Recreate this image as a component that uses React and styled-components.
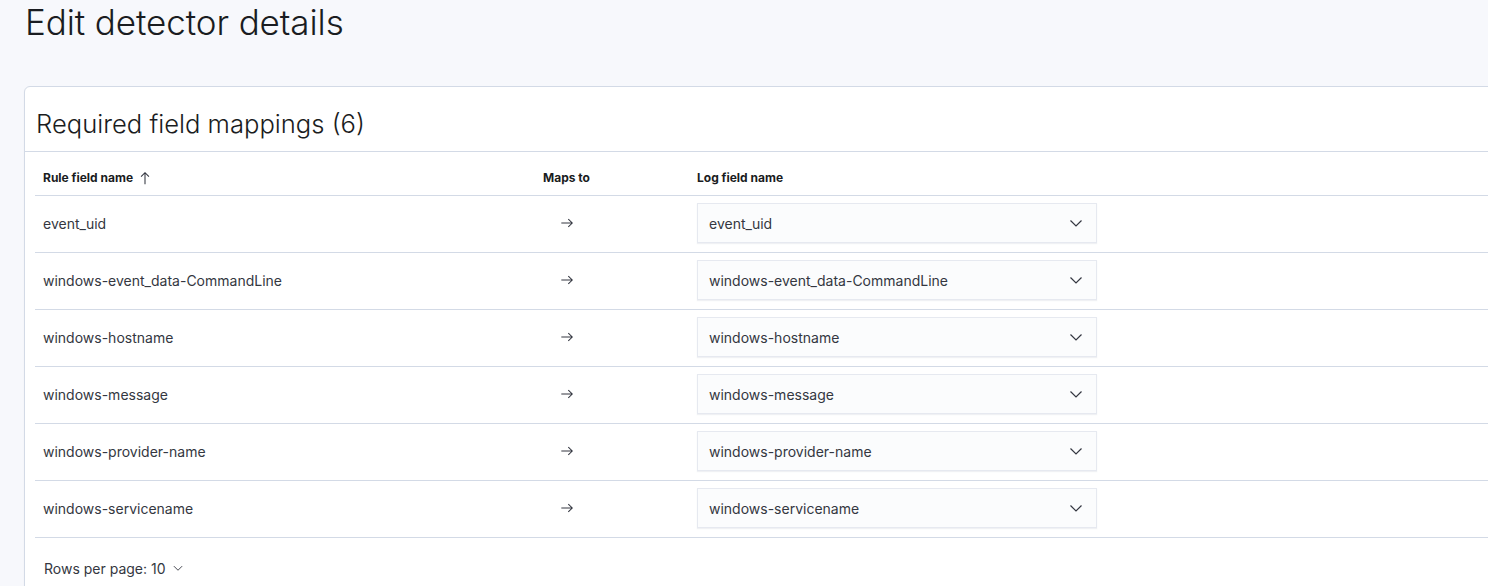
import styled, { createGlobalStyle } from 'styled-components'

const GlobalStyle = createGlobalStyle`
    html, body {
        margin: 0;
        padding: 0;
        background: #f7f8fc;
        overflow: hidden;
    }
    body {
        font-family: Inter, "Noto Sans", sans-serif;
        color: #343741;
        -webkit-font-smoothing: antialiased;
    }
`

const Page = styled.div`
    width: 1700px;
    padding: 0 0 0 24px;
`

const PageTitle = styled.h1`
    margin: 0;
    padding: 0 0 0 1px;
    height: 86px;
    font-size: 35px;
    font-weight: 300;
    line-height: 44px;
    color: #1a1c21;
    letter-spacing: -0.1px;
`

const Panel = styled.section`
    background: #fff;
    border: 1px solid #d3dae6;
    border-radius: 6px;
    box-shadow: 0 1px 2px rgba(0, 0, 0, 0.04);
`

const PanelHeader = styled.div`
    height: 64px;
    padding: 0 11px;
    display: flex;
    align-items: center;
    border-bottom: 1px solid #d3dae6;
`

const PanelTitle = styled.h2`
    margin: 8px 0 0;
    font-size: 25.6px;
    font-weight: 300;
    color: #1a1c21;
`

const TableWrap = styled.div`
    padding: 0 0 0 10px;
`

const Row = styled.div`
    display: grid;
    grid-template-columns: 500px 154px 1fr;
    align-items: center;
    box-sizing: border-box;
    height: ${(p) => (p.$head ? 44 : 57)}px;
    padding: ${(p) => (p.$head ? '8px 0 0' : '0 0 2px')};
    border-bottom: 1px solid #d3dae6;
`

const HeadCell = styled.div`
    padding: 0 8px;
    font-size: 12px;
    font-weight: 700;
    color: #1a1c21;
    display: flex;
    align-items: center;
    gap: 5px;
`

const Cell = styled.div`
    padding: 0 8px;
    font-size: 14px;
    color: #343741;
    display: flex;
    align-items: center;
`

const ArrowBox = styled.span`
    display: inline-flex;
    justify-content: center;
    width: 47px;
    color: #343741;
`

const Select = styled.div`
    width: 400px;
    height: 40px;
    box-sizing: border-box;
    display: flex;
    align-items: center;
    justify-content: space-between;
    padding: 0 12px 0 11px;
    background: #fbfcfd;
    border: 1px solid #e6e9f0;
    box-shadow: 0 1px 1px rgba(152, 162, 179, 0.15);
    font-size: 14px;
    color: #343741;
`

const Pagination = styled.div`
    height: 60px;
    padding: 0 0 0 9px;
    display: flex;
    align-items: center;
    gap: 6px;
    font-size: 14px;
    color: #343741;
`

const ArrowRight = () => (
    <svg width="14" height="14" viewBox="0 0 16 16" fill="none" stroke="currentColor" strokeWidth="1.2">
        <path d="M1.5 8h12.5M9.5 3.5 14 8l-4.5 4.5" />
    </svg>
)

const ArrowUp = () => (
    <svg width="14" height="14" viewBox="0 0 16 16" fill="none" stroke="#343741" strokeWidth="1.2">
        <path d="M8 15V2M3.5 6.5 8 2l4.5 4.5" />
    </svg>
)

const Chevron = ({ size = 16 }) => (
    <svg width={size} height={size} viewBox="0 0 16 16" fill="none" stroke="#343741" strokeWidth="1.2">
        <path d="M2.5 5.5 8 11l5.5-5.5" />
    </svg>
)

const fields = [
    'event_uid',
    'windows-event_data-CommandLine',
    'windows-hostname',
    'windows-message',
    'windows-provider-name',
    'windows-servicename',
]

export default function App() {
    return (
        <Page>
            <GlobalStyle />
            <PageTitle>Edit detector details</PageTitle>
            <Panel>
                <PanelHeader>
                    <PanelTitle>Required field mappings ({fields.length})</PanelTitle>
                </PanelHeader>
                <TableWrap>
                    <Row $head>
                        <HeadCell>
                            Rule field name <ArrowUp />
                        </HeadCell>
                        <HeadCell>Maps to</HeadCell>
                        <HeadCell>Log field name</HeadCell>
                    </Row>
                    {fields.map((f) => (
                        <Row key={f}>
                            <Cell>{f}</Cell>
                            <Cell>
                                <ArrowBox>
                                    <ArrowRight />
                                </ArrowBox>
                            </Cell>
                            <Cell>
                                <Select>
                                    {f}
                                    <Chevron />
                                </Select>
                            </Cell>
                        </Row>
                    ))}
                    <Pagination>
                        Rows per page: 10 <Chevron size={12} />
                    </Pagination>
                </TableWrap>
            </Panel>
        </Page>
    )
}
